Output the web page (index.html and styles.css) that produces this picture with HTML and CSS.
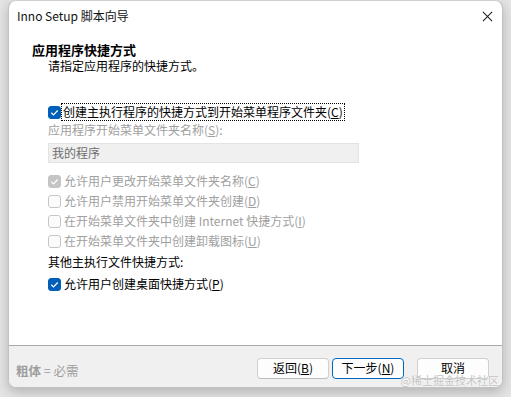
FILE: index.html
```html
<!DOCTYPE html>
<html lang="zh">
<head>
<meta charset="utf-8">
<title>Inno Setup 脚本向导</title>
<link rel="stylesheet" href="styles.css">
</head>
<body>
<div class="window">
  <div class="titlebar">
    <span class="title">Inno Setup 脚本向导</span>
    <svg class="close" width="12" height="12" viewBox="0 0 12 12"><path d="M1 1 L11 11 M11 1 L1 11" stroke="#1a1a1a" stroke-width="1.1" fill="none"/></svg>
  </div>
  <div class="content">
    <div class="heading">应用程序快捷方式</div>
    <div class="subtitle">请指定应用程序的快捷方式。</div>
    <div class="row first">
      <span class="cb checked"><svg viewBox="0 0 13 13"><path d="M3.3 6.8 L5.5 8.9 L9.7 4.5" stroke="#fff" stroke-width="1.2" fill="none"/></svg></span>
      <span class="label focus">创建主执行程序的快捷方式到开始菜单程序文件夹(<u>C</u>)</span>
    </div>
    <div class="field-label">应用程序开始菜单文件夹名称(<u>S</u>):</div>
    <div class="input">我的程序</div>
    <div class="row disabled gap">
      <span class="cb checked-dis"><svg viewBox="0 0 13 13"><path d="M3.3 6.8 L5.5 8.9 L9.7 4.5" stroke="#fff" stroke-width="1.2" fill="none"/></svg></span>
      <span class="label">允许用户更改开始菜单文件夹名称(<u>C</u>)</span>
    </div>
    <div class="row disabled">
      <span class="cb"></span>
      <span class="label">允许用户禁用开始菜单文件夹创建(<u>D</u>)</span>
    </div>
    <div class="row disabled">
      <span class="cb"></span>
      <span class="label">在开始菜单文件夹中创建 Internet 快捷方式(<u>I</u>)</span>
    </div>
    <div class="row disabled">
      <span class="cb"></span>
      <span class="label">在开始菜单文件夹中创建卸载图标(<u>U</u>)</span>
    </div>
    <div class="other">其他主执行文件快捷方式:</div>
    <div class="row last">
      <span class="cb checked"><svg viewBox="0 0 13 13"><path d="M3.3 6.8 L5.5 8.9 L9.7 4.5" stroke="#fff" stroke-width="1.2" fill="none"/></svg></span>
      <span class="label">允许用户创建桌面快捷方式(<u>P</u>)</span>
    </div>
  </div>
  <div class="footer">
    <span class="note"><b>粗体</b> = 必需</span>
    <div class="buttons">
      <button class="btn">返回(<u>B</u>)</button>
      <button class="btn default">下一步(<u>N</u>)</button>
      <button class="btn cancel">取消</button>
    </div>
  </div>
  <span class="watermark">@稀土掘金技术社区</span>
</div>
</body>
</html>
```
FILE: styles.css
```css
html, body {
  margin: 0;
  padding: 0;
}
body {
  width: 511px;
  height: 397px;
  background: #e4e4e4;
  font-family: "Noto Sans CJK SC", "Noto Sans", sans-serif;
  font-size: 12px;
  color: #000;
  overflow: hidden;
}
.window {
  position: relative;
  margin-left: 8px;
  width: 493px;
  height: 386px;
  border: 1px solid #c2c2c2;
  border-top-color: #d0d0d0;
  border-radius: 8px;
  background: #fff;
  box-shadow: 0 4px 12px rgba(0,0,0,0.22);
  display: flex;
  flex-direction: column;
  overflow: hidden;
}
.titlebar {
  height: 30px;
  display: flex;
  align-items: center;
  justify-content: space-between;
  padding: 0 9px 0 8px;
  flex: none;
}
.title {
  line-height: 16px;
  color: #111;
}
.close {
  width: 11px;
  height: 11px;
}
.content {
  flex: 1;
  padding-top: 10px;
}
.heading {
  font-weight: bold;
  font-size: 13px;
  padding-left: 23px;
  line-height: 17px;
}
.subtitle {
  padding-left: 39px;
  line-height: 16px;
}
.row {
  display: flex;
  align-items: center;
  height: 20px;
  padding-left: 39px;
}
.row.first {
  margin-top: 28px;
}
.row.gap {
  margin-top: 8px;
}
.row.last {
  margin-top: 2px;
}
.cb {
  width: 11px;
  height: 11px;
  border: 1px solid #c6c6c6;
  border-radius: 3px;
  background: #fbfbfb;
  box-sizing: content-box;
  flex: none;
  display: flex;
}
.cb svg {
  width: 13px;
  height: 13px;
  margin: -1px;
}
.cb.checked {
  background: #005fb8;
  border-color: #005fb8;
}
.cb.checked-dis {
  background: #c5c5c5;
  border-color: #c5c5c5;
}
.label {
  margin-left: 3px;
  line-height: 16px;
  white-space: nowrap;
}
.label.focus {
  margin-left: 1px;
  padding: 0 1px;
  outline: 1px dotted #000;
  outline-offset: 0;
}
.row.disabled .label {
  color: #a0a0a0;
}
.field-label {
  padding-left: 39px;
  line-height: 16px;
  color: #a0a0a0;
}
.input {
  margin: 5px 0 0 39px;
  height: 18px;
  border: 1px solid #e3e3e3;
  background: #f0f0f0;
  color: #6d6d6d;
  line-height: 18px;
  padding-left: 3px;
  box-sizing: content-box;
  width: 306px;
}
.other {
  padding-left: 39px;
  line-height: 20px;
  margin-top: 1px;
}
.footer {
  height: 41px;
  flex: none;
  border-top: 1px solid #a9a9a9;
  background: #f0f0f0;
  display: flex;
  align-items: center;
  justify-content: space-between;
  padding: 0 13px 0 7px;
}
.note {
  color: #9e9e9e;
  font-size: 12.5px;
  line-height: 16px;
  margin-top: 8px;
}
.note b {
  font-weight: bold;
}
.buttons {
  display: flex;
  margin-top: 3px;
}
.btn {
  width: 72px;
  height: 21px;
  border: 1px solid #d0d0d0;
  border-bottom-color: #bdbdbd;
  border-radius: 4px;
  background: #fdfdfd;
  font-family: inherit;
  font-size: 12px;
  line-height: 16px;
  padding: 0;
  color: #000;
  margin-left: 3px;
}
.btn.default {
  border: 1px solid #0067c0;
}
.btn.cancel {
  margin-left: 13px;
}
.watermark {
  position: absolute;
  right: 3px;
  bottom: 0px;
  font-size: 11px;
  line-height: 14px;
  color: #c2c2c2;
  text-shadow: 0 0 1px #fff, 0 0 1px #fff;
}
```
